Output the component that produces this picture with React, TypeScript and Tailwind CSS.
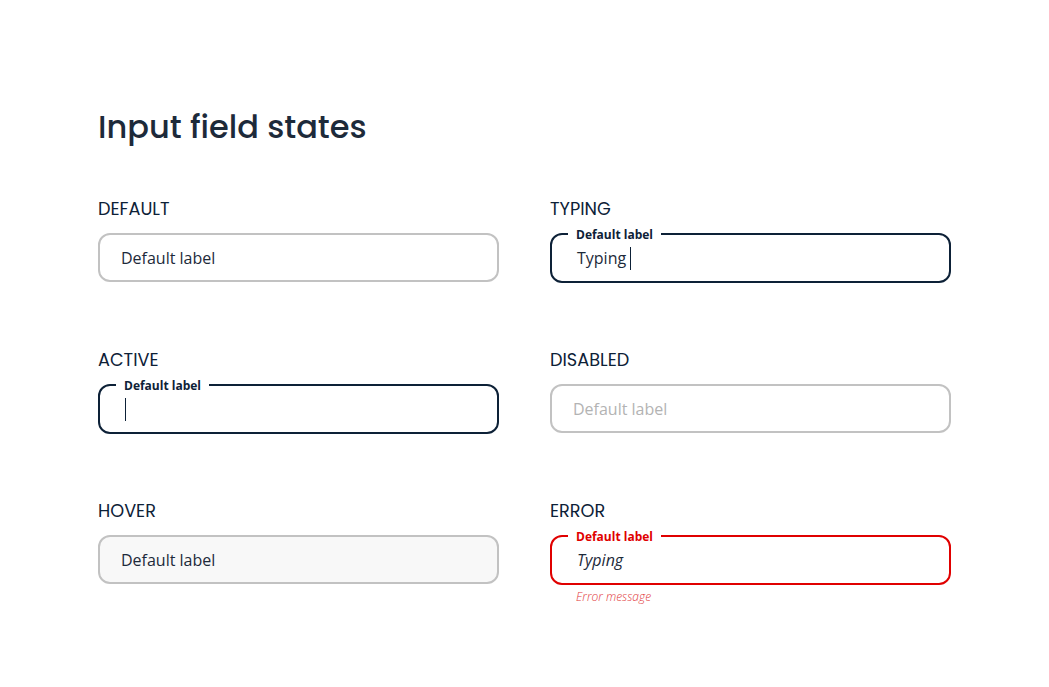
import React from 'react';

type State = 'default' | 'typing' | 'active' | 'disabled' | 'hover' | 'error';

const heading = "font-['Poppins','Inter','Noto_Sans',sans-serif]";
const body = "font-['Open_Sans','Noto_Sans',sans-serif]";

function Caret() {
  return <span className="inline-block w-px h-[23px] bg-[#0d2137] align-middle" />;
}

function Field({ state }: { state: State }) {
  // Plain boxes: no floating label
  if (state === 'default' || state === 'disabled' || state === 'hover') {
    const box =
      state === 'hover'
        ? 'bg-[#f8f8f8] text-[#1d2a3a]'
        : state === 'disabled'
        ? 'bg-white text-[#b3b3b3]'
        : 'bg-white text-[#1d2a3a]';
    return (
      <div
        className={`h-[49px] rounded-[12px] border-2 border-[#c2c2c2] flex items-center pl-[21px] text-base ${body} ${box}`}
      >
        Default label
      </div>
    );
  }

  const isError = state === 'error';
  const border = isError ? 'border-[#e00000]' : 'border-[#0d2137]';
  const labelColor = isError ? 'text-[#e00000]' : 'text-[#0d2137]';

  return (
    <div>
      <fieldset className={`h-[57px] -mt-[7px] rounded-[12px] border-2 ${border} px-4 ${body}`}>
        <legend className={`px-2 text-xs font-bold leading-4 translate-y-[1px] ${labelColor}`}>Default label</legend>
        <div className="h-[28px] pl-[9px] flex items-center text-base text-[#1d2a3a] mt-[2px]">
          {state === 'typing' && (
            <>
              <span>Typing</span>
              <span className="ml-[4px] flex">
                <Caret />
              </span>
            </>
          )}
          {state === 'active' && <Caret />}
          {state === 'error' && <span className="italic">Typing</span>}
        </div>
      </fieldset>
      {isError && (
        <p className={`mt-[3px] pl-[26px] text-[12px] italic font-light text-[#e2383b] ${body}`}>Error message</p>
      )}
    </div>
  );
}

function Section({ title, state }: { title: string; state: State }) {
  return (
    <div className="h-[151px]">
      <h2 className={`text-[17.7px] leading-[22px] text-[#0d2137] mb-[13px] ${heading}`}>{title}</h2>
      <Field state={state} />
    </div>
  );
}

export default function App() {
  const sections: { title: string; state: State }[] = [
    { title: 'DEFAULT', state: 'default' },
    { title: 'TYPING', state: 'typing' },
    { title: 'ACTIVE', state: 'active' },
    { title: 'DISABLED', state: 'disabled' },
    { title: 'HOVER', state: 'hover' },
    { title: 'ERROR', state: 'error' },
  ];

  return (
    <div className="w-[1049px] h-[687px] bg-white pt-[106px] pl-[98px]">
      <h1 className={`text-[32px] leading-[42px] font-medium text-[#1d2a3a] ${heading}`}>Input field states</h1>
      <div className="mt-[50px] grid grid-cols-[401px_401px] gap-x-[51px]">
        {sections.map((s) => (
          <Section key={s.title} title={s.title} state={s.state} />
        ))}
      </div>
    </div>
  );
}
